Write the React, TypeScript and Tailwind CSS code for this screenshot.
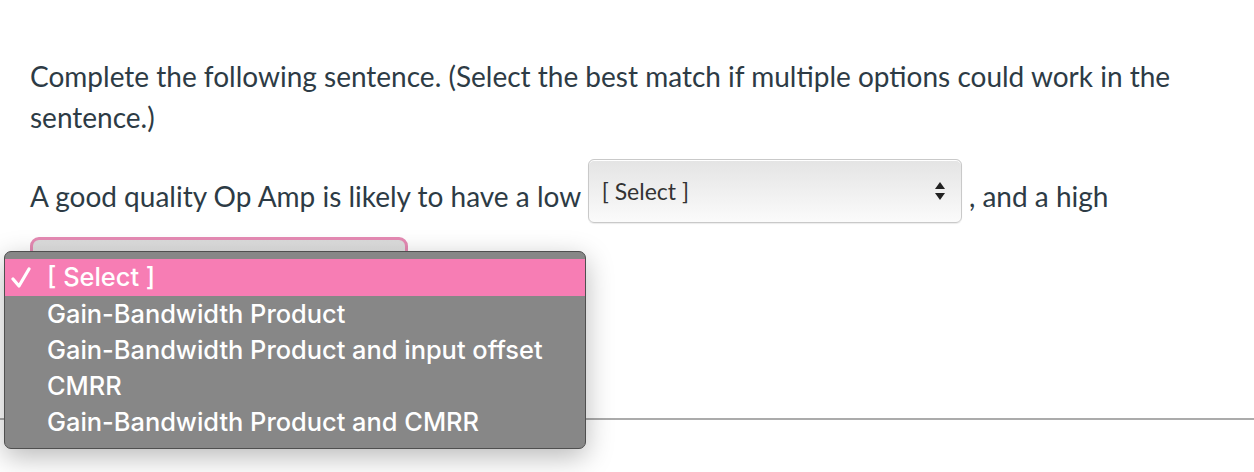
import React from 'react';

const options = [
  '[ Select ]',
  'Gain-Bandwidth Product',
  'Gain-Bandwidth Product and input offset',
  'CMRR',
  'Gain-Bandwidth Product and CMRR',
];

// Closed select (the one in the sentence)
const SelectBox = () => (
  <div className="relative flex h-[64px] w-[374px] items-center rounded-[6px] border border-[#c9c9c9] bg-gradient-to-b from-[#e4e4e4] to-[#fbfbfb] pl-[13px] shadow-[inset_0_1px_0_#fff,0_1px_1px_rgba(0,0,0,0.08)]">
    <span className="text-[23px] text-[#333]">[ Select ]</span>
    <svg className="absolute right-[16px] top-[22px]" width="10" height="18" viewBox="0 0 10 18">
      <path d="M5 0 L10 7 L0 7 Z" fill="#222" />
      <path d="M5 18 L10 11 L0 11 Z" fill="#222" />
    </svg>
  </div>
);

const Check = () => (
  <svg width="20" height="24" viewBox="0 0 20 24" className="ml-[6px] mr-[16px]">
    <path d="M2 13 L8 20 L18 3" fill="none" stroke="#fff" strokeWidth="3.2" strokeLinecap="round" strokeLinejoin="round" />
  </svg>
);

// Open menu over the page
const Menu = () => (
  <div className="absolute left-[4px] top-[251px] w-[582px] rounded-[7px] border border-[#4f4f4f] bg-[#878787] pt-[7px] pb-[8px] shadow-[0_8px_28px_rgba(0,0,0,0.28)] font-['Inter',sans-serif] font-medium text-white">
    {options.map((opt, i) => (
      <div
        key={opt}
        className={
          i === 0
            ? 'flex h-[37px] items-center bg-[#f77db4] text-[25.4px]'
            : 'flex h-[36px] items-center pl-[42px] text-[25.4px]'
        }
      >
        {i === 0 && <Check />}
        <span>{opt}</span>
      </div>
    ))}
  </div>
);

export default function App() {
  return (
    <div className="relative h-[472px] w-[1254px] overflow-hidden bg-white font-['Lato',sans-serif] text-[#2d3b45]">
      <div className="pl-[30px] pt-[56px]">
        <p className="w-[1190px] text-[28px] leading-[41px]">
          Complete the following sentence. (Select the best match if multiple options could work in the sentence.)
        </p>

        <div className="mt-[21px] flex items-start text-[28px] leading-[42px]">
          <span className="mt-[16px]">A good quality Op Amp is likely to have a low&nbsp;</span>
          <SelectBox />
          <span className="mt-[16px]">&nbsp;, and a high</span>
        </div>

        <div className="mt-[14px] h-[64px] w-[378px] rounded-[9px] border-[3px] border-[#e58ab3] bg-gradient-to-b from-[#dcdcdc] to-[#f4f4f4]" />
      </div>

      <div className="mt-[117px] h-[2px] w-full bg-[#ababab]" />

      <Menu />
    </div>
  );
}
